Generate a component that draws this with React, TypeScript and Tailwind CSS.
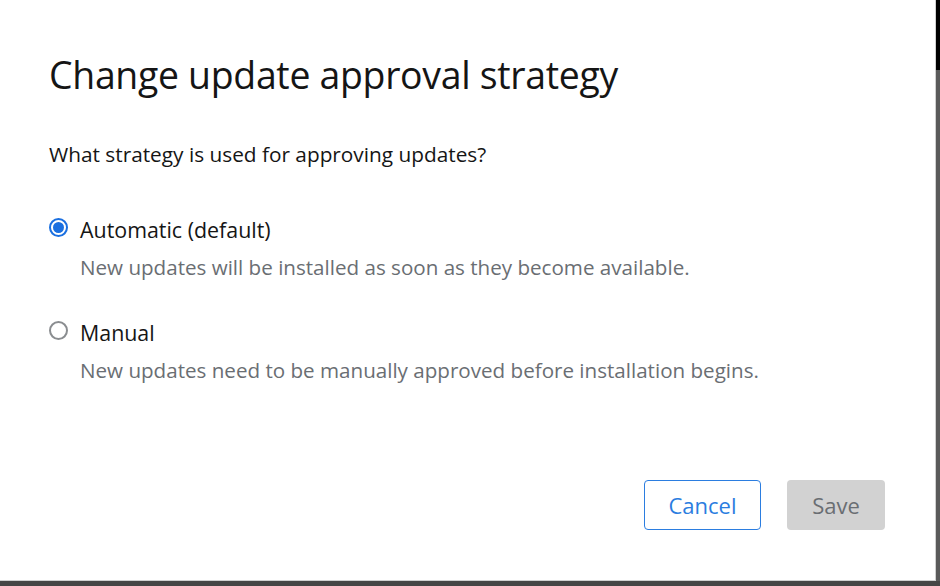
import { useState } from 'react';

const options = [
  {
    id: 'automatic',
    label: 'Automatic (default)',
    description: 'New updates will be installed as soon as they become available.',
  },
  {
    id: 'manual',
    label: 'Manual',
    description: 'New updates need to be manually approved before installation begins.',
  },
];

// Modal for choosing how cluster updates get approved.
export default function App() {
  const [strategy, setStrategy] = useState('automatic');

  return (
    <div className="w-[940px] h-[586px] bg-[#454545] flex flex-col overflow-hidden font-['Open_Sans',sans-serif]">
      <div className="flex">
        <div className="w-[936px] h-[581px] bg-white border-r border-b border-[#d0d0d0] flex flex-col px-[49px] pt-[51px] pb-[50px]">
          <h1 className="text-[37.4px] leading-[48px] text-[#151515] tracking-[-0.3px]">
            Change update approval strategy
          </h1>

          <p className="mt-[41px] text-[20.8px] leading-[28px] text-[#151515]">
            What strategy is used for approving updates?
          </p>

          <div className="mt-[47px] flex flex-col gap-[37px]">
            {options.map((opt) => (
              <label key={opt.id} className="flex gap-[12px] cursor-pointer">
                <span
                  className="mt-[3px] w-[19px] h-[19px] rounded-full border-2 border-[#8a8d90] flex items-center justify-center shrink-0 data-[on=true]:border-[#1a6fe0]"
                  data-on={strategy === opt.id}
                >
                  {strategy === opt.id && <span className="w-[11px] h-[11px] rounded-full bg-[#1a6fe0]" />}
                  <input
                    type="radio"
                    className="hidden"
                    checked={strategy === opt.id}
                    onChange={() => setStrategy(opt.id)}
                  />
                </span>
                <div>
                  <p className="text-[21.4px] leading-[30px] text-[#151515]">{opt.label}</p>
                  <p className="mt-[8px] text-[20.6px] leading-[28px] text-[#6a6e73]">{opt.description}</p>
                </div>
              </label>
            ))}
          </div>

          <div className="mt-auto flex justify-end gap-[26px] pr-[1px]">
            <button className="w-[117px] h-[50px] rounded-[4px] border border-[#2b7de0] text-[22px] text-[#2b7de0]">
              Cancel
            </button>
            <button className="w-[98px] h-[50px] rounded-[4px] bg-[#d2d2d2] text-[22px] text-[#6a6e73]" disabled>
              Save
            </button>
          </div>
        </div>
        <div className="flex-1 flex flex-col">
          <div className="h-[70px] bg-black" />
          <div className="flex-1 bg-[#5a5a5a]" />
        </div>
      </div>
    </div>
  );
}
